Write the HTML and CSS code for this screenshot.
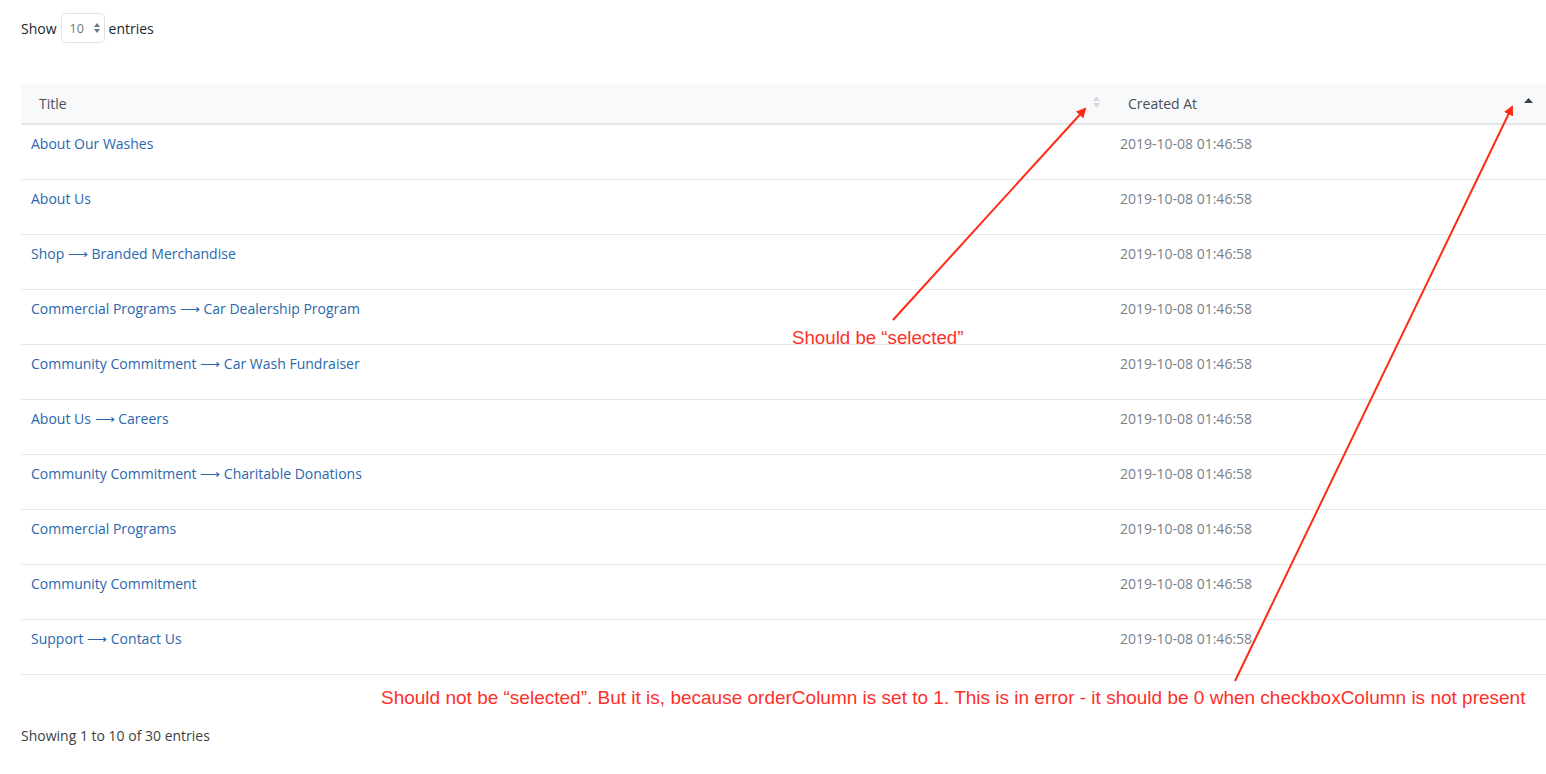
FILE: index.html
```html
<!DOCTYPE html>
<html>
<head>
<meta charset="utf-8">
<link rel="stylesheet" href="styles.css">
</head>
<body>
<div class="page">
  <div class="length">
    <span>Show</span>
    <span class="select"><span class="val">10</span><svg class="updown" width="6" height="10" viewBox="0 0 6 10"><path d="M3 0 L6 4 L0 4Z M3 10 L6 6 L0 6Z" fill="#6c757d"/></svg></span>
    <span>entries</span>
  </div>
  <table class="grid">
    <thead>
      <tr>
        <th class="c-title"><span>Title</span><svg class="sort" width="7" height="11" viewBox="0 0 7 11"><path d="M3.5 0 L7 4.5 L0 4.5Z M3.5 11 L7 6.5 L0 6.5Z" fill="#d3d6da"/></svg></th>
        <th class="c-date"><span>Created At</span><svg class="sort" width="9" height="5" viewBox="0 0 9 5"><path d="M4.5 0 L9 5 L0 5Z" fill="#3c4248"/></svg></th>
      </tr>
    </thead>
    <tbody>
      <tr><td><a>About Our Washes</a></td><td class="d">2019-10-08 01:46:58</td></tr>
      <tr><td><a>About Us</a></td><td class="d">2019-10-08 01:46:58</td></tr>
      <tr><td><a>Shop ⟶ Branded Merchandise</a></td><td class="d">2019-10-08 01:46:58</td></tr>
      <tr><td><a>Commercial Programs ⟶ Car Dealership Program</a></td><td class="d">2019-10-08 01:46:58</td></tr>
      <tr><td><a>Community Commitment ⟶ Car Wash Fundraiser</a></td><td class="d">2019-10-08 01:46:58</td></tr>
      <tr><td><a>About Us ⟶ Careers</a></td><td class="d">2019-10-08 01:46:58</td></tr>
      <tr><td><a>Community Commitment ⟶ Charitable Donations</a></td><td class="d">2019-10-08 01:46:58</td></tr>
      <tr><td><a>Commercial Programs</a></td><td class="d">2019-10-08 01:46:58</td></tr>
      <tr><td><a>Community Commitment</a></td><td class="d">2019-10-08 01:46:58</td></tr>
      <tr><td><a>Support ⟶ Contact Us</a></td><td class="d">2019-10-08 01:46:58</td></tr>
    </tbody>
  </table>
  <div class="info">Showing 1 to 10 of 30 entries</div>
</div>
<div class="note n1">Should be “selected”</div>
<div class="note n2">Should not be “selected”. But it is, because orderColumn is set to 1. This is in error - it should be 0 when checkboxColumn is not present</div>
<svg class="arrows" width="1546" height="774" viewBox="0 0 1546 774">
  <defs>
    <marker id="ah" markerWidth="10" markerHeight="10" refX="8" refY="5" orient="auto" markerUnits="userSpaceOnUse">
      <path d="M0 0 L10 5 L0 10 Z" fill="#ff2a14"/>
    </marker>
  </defs>
  <line x1="893" y1="320" x2="1085" y2="109" stroke="#ff2a14" stroke-width="2" marker-end="url(#ah)"/>
  <line x1="1235" y1="681" x2="1512" y2="107" stroke="#ff2a14" stroke-width="2" marker-end="url(#ah)"/>
</svg>
</body>
</html>
```
FILE: styles.css
```css
html, body { margin: 0; padding: 0; background: #fff; }
body { font-family: "Open Sans", "Liberation Sans", sans-serif; font-size: 14px; color: #212529; width: 1546px; height: 774px; overflow: hidden; position: relative; }
.page { padding: 13px 0 0 21px; }
.length { display: flex; align-items: center; gap: 4px; height: 30px; }
.select { display: inline-flex; align-items: center; justify-content: space-between; box-sizing: border-box; width: 44px; height: 30px; border: 1px solid #dfe3e7; border-radius: 4px; padding: 0 4px 0 8px; color: #6c757d; font-size: 12.5px; }
.grid { margin-top: 40px; width: 1525px; border-collapse: collapse; table-layout: fixed; }
.grid th { background: #f8f9fb; height: 41px; box-sizing: border-box; font-weight: 400; color: #495057; text-align: left; padding: 0 18px; border-bottom: 2px solid #e4e5e7; position: relative; }
.grid th.c-title { width: 1089px; }
.grid th .sort { position: absolute; right: 10px; top: 50%; transform: translateY(-60%); }
.grid th.c-date .sort { right: 13px; transform: translateY(-100%); }
.grid td { height: 55px; padding: 8px 10px 0; vertical-align: top; line-height: 21px; border-bottom: 1px solid #e6e7e9; box-sizing: border-box; }
.grid a { color: #2a67ad; text-decoration: none; }
.grid td.d { color: #7a8087; }
.info { margin-top: 51px; color: #3a3f44; }
.note { position: absolute; font-family: "Liberation Sans", Arial, sans-serif; color: #ff2f2a; white-space: nowrap; line-height: 22px; }
.n1 { left: 792px; top: 327px; font-size: 18.7px; }
.n2 { left: 381px; top: 687px; font-size: 19px; }
.arrows { position: absolute; left: 0; top: 0; pointer-events: none; }
```
